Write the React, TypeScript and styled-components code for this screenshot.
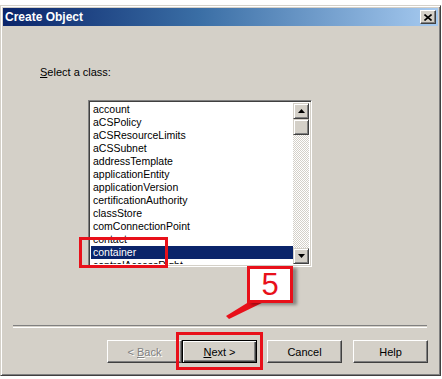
import React from 'react';
import styled, { createGlobalStyle } from 'styled-components';

const GlobalStyle = createGlobalStyle`
  html, body {
    margin: 0;
    padding: 0;
    background: #ffffff;
  }
  body {
    font-family: "Liberation Sans", Arial, sans-serif;
    font-size: 11px;
    color: #000;
  }
`;

const Stage = styled.div`
  position: relative;
  width: 442px;
  height: 379px;
  overflow: hidden;
  padding-top: 5px;
  box-sizing: border-box;
`;

const Window = styled.div`
  width: 441px;
  height: 371px;
  box-sizing: border-box;
  background: #d4d0c8;
  border: 1px solid;
  border-color: #d4d0c8 #404040 #404040 #d4d0c8;
  box-shadow: inset 1px 1px #ffffff, inset -1px -1px #808080;
  padding: 2px;
  display: flex;
  flex-direction: column;
`;

const TitleBar = styled.div`
  height: 18px;
  flex-shrink: 0;
  display: flex;
  align-items: center;
  justify-content: space-between;
  padding: 0 2px 0 2px;
  background: linear-gradient(to right, #0a246a 0%, #3a6ea5 45%, #a6caf0 100%);
`;

const Title = styled.span`
  color: #ffffff;
  font-weight: bold;
  font-size: 12px;
  line-height: 18px;
`;

const CloseButton = styled.div`
  width: 16px;
  height: 14px;
  box-sizing: border-box;
  background: #d4d0c8;
  border: 1px solid;
  border-color: #ffffff #404040 #404040 #ffffff;
  box-shadow: inset -1px -1px #808080;
  display: flex;
  align-items: center;
  justify-content: center;
`;

const Body = styled.div`
  flex: 1;
  display: flex;
  flex-direction: column;
`;

const Label = styled.div`
  margin: 40px 0 0 37px;
  line-height: 13px;
`;

const ListBox = styled.div`
  margin: 21px 0 0 85px;
  width: 224px;
  height: 167px;
  box-sizing: border-box;
  background: #ffffff;
  border: 1px solid;
  border-color: #808080 #ffffff #ffffff #808080;
  box-shadow: inset 1px 1px #404040, inset -1px -1px #d4d0c8;
  padding: 2px;
  display: flex;
`;

const Items = styled.div`
  flex: 1;
  overflow: hidden;
  display: flex;
  flex-direction: column;
`;

const Item = styled.div<{ $selected?: boolean }>`
  height: 13px;
  flex-shrink: 0;
  line-height: 13px;
  padding-left: 2px;
  font-size: 10.5px;
  white-space: nowrap;
  background: ${(p) => (p.$selected ? '#0a246a' : 'transparent')};
  color: ${(p) => (p.$selected ? '#ffffff' : '#000000')};
`;

const ScrollBar = styled.div`
  width: 16px;
  display: flex;
  flex-direction: column;
  background: repeating-conic-gradient(#ffffff 0 25%, #d4d0c8 0 50%) 0 0 / 2px 2px;
`;

const ScrollPart = styled.div`
  width: 16px;
  height: 16px;
  box-sizing: border-box;
  background: #d4d0c8;
  border: 1px solid;
  border-color: #d4d0c8 #404040 #404040 #d4d0c8;
  box-shadow: inset 1px 1px #ffffff, inset -1px -1px #808080;
  display: flex;
  align-items: center;
  justify-content: center;
`;

const Track = styled.div`
  flex: 1;
`;

const Separator = styled.div`
  margin: 58px 0 0 10px;
  width: 414px;
  height: 1px;
  border-top: 1px solid #808080;
  border-bottom: 1px solid #ffffff;
`;

const ButtonRow = styled.div`
  margin-top: 12px;
  padding-right: 10px;
  display: flex;
  justify-content: flex-end;
`;

const Button = styled.div<{ $default?: boolean; $disabled?: boolean; $gap?: number }>`
  width: 75px;
  height: 23px;
  box-sizing: border-box;
  margin-left: ${(p) => p.$gap ?? 0}px;
  background: #d4d0c8;
  border: 1px solid;
  border-color: ${(p) => (p.$default ? '#000000' : '#ffffff #404040 #404040 #ffffff')};
  box-shadow: ${(p) =>
    p.$default
      ? 'inset 1px 1px #ffffff, inset -1px -1px #404040, inset -2px -2px #808080'
      : 'inset -1px -1px #808080'};
  display: flex;
  align-items: center;
  justify-content: center;
  font-size: 11px;
  color: ${(p) => (p.$disabled ? '#808080' : '#000000')};
  text-shadow: ${(p) => (p.$disabled ? '1px 1px #ffffff' : 'none')};
`;

const RedFrame = styled.div<{ $x: number; $y: number; $w: number; $h: number }>`
  position: absolute;
  left: ${(p) => p.$x}px;
  top: ${(p) => p.$y}px;
  width: ${(p) => p.$w}px;
  height: ${(p) => p.$h}px;
  box-sizing: border-box;
  border: 3px solid #e8101a;
`;

const Callout = styled.div`
  position: absolute;
  left: 247px;
  top: 266px;
  width: 46px;
  height: 37px;
  box-sizing: border-box;
  background: #ffffff;
  border: 3px solid #e8101a;
  box-shadow: 4px 2px 3px rgba(0, 0, 0, 0.35);
  display: flex;
  align-items: center;
  justify-content: center;
  color: #e8101a;
  font-size: 31px;
  line-height: 31px;
`;

const Tail = styled.svg`
  position: absolute;
  left: 222px;
  top: 298px;
`;

const classes = [
  'account',
  'aCSPolicy',
  'aCSResourceLimits',
  'aCSSubnet',
  'addressTemplate',
  'applicationEntity',
  'applicationVersion',
  'certificationAuthority',
  'classStore',
  'comConnectionPoint',
  'contact',
  'container',
  'controlAccessRight',
];

const Arrow = ({ down }: { down?: boolean }) => (
  <svg width="7" height="4" viewBox="0 0 7 4">
    <path d={down ? 'M0 0H7L3.5 4Z' : 'M0 4H7L3.5 0Z'} fill="#000" />
  </svg>
);

const App = () => {
  return (
    <>
      <GlobalStyle />
      <Stage>
        <Window>
          <TitleBar>
            <Title>Create Object</Title>
            <CloseButton>
              <svg width="8" height="7" viewBox="0 0 8 7">
                <path d="M0.5 0.5L7.5 6.5M7.5 0.5L0.5 6.5" stroke="#000" strokeWidth="1.6" />
              </svg>
            </CloseButton>
          </TitleBar>
          <Body>
            <Label>
              <u>S</u>elect a class:
            </Label>
            <ListBox>
              <Items>
                {classes.map((c) => (
                  <Item key={c} $selected={c === 'container'}>
                    {c}
                  </Item>
                ))}
              </Items>
              <ScrollBar>
                <ScrollPart>
                  <Arrow />
                </ScrollPart>
                <ScrollPart />
                <Track />
                <ScrollPart>
                  <Arrow down />
                </ScrollPart>
              </ScrollBar>
            </ListBox>
            <Separator />
            <ButtonRow>
              <Button $disabled>
                &lt;&nbsp;<u>B</u>ack
              </Button>
              <Button $default>
                <u>N</u>ext &gt;
              </Button>
              <Button $gap={10}>Cancel</Button>
              <Button $gap={11}>Help</Button>
            </ButtonRow>
          </Body>
        </Window>
        <RedFrame $x={79} $y={237} $w={89} $h={31} />
        <RedFrame $x={176} $y={332} $w={87} $h={38} />
        <Tail width="50" height="24" viewBox="0 0 50 24">
          <polygon points="30,2 46,2 7,21 4,18" fill="#e8101a" />
        </Tail>
        <Callout>5</Callout>
      </Stage>
    </>
  );
};

export default App;
